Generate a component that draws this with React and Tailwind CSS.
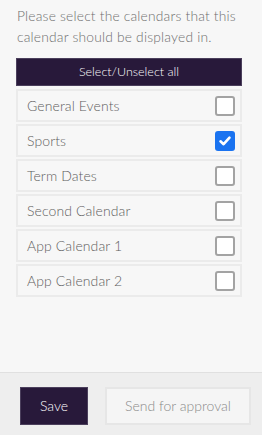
import React, { useState } from 'react'

const calendars = [
  { name: 'General Events', checked: false },
  { name: 'Sports', checked: true },
  { name: 'Term Dates', checked: false },
  { name: 'Second Calendar', checked: false },
  { name: 'App Calendar 1', checked: false },
  { name: 'App Calendar 2', checked: false },
]

function Box({ checked }) {
  if (checked) {
    return (
      <span className="w-[20px] h-[20px] rounded-[3px] bg-[#1a73f0] flex items-center justify-center shrink-0">
        <svg width="14" height="14" viewBox="0 0 14 14" fill="none">
          <path d="M2.5 7.3 L5.6 10.2 L11.5 3.6" stroke="white" strokeWidth="2.6" strokeLinecap="round" strokeLinejoin="round" />
        </svg>
      </span>
    )
  }
  return <span className="w-[20px] h-[20px] rounded-[3px] border-2 border-[#a3a3a3] bg-white shrink-0"></span>
}

export default function App() {
  const [items, setItems] = useState(calendars)

  const toggle = i => setItems(items.map((c, j) => (j === i ? { ...c, checked: !c.checked } : c)))

  return (
    <div className="w-[262px] h-[435px] bg-[#f7f7f7] flex flex-col font-light font-['Lato','Liberation_Sans',sans-serif]">
      <div className="flex-1 px-[16px] pt-[5px]">
        {/* Intro */}
        <p className="text-[13.8px] leading-[21px] text-[#6e6e6e] pl-[1px] tracking-[0.2px]">
          Please select the calendars that this calendar should be displayed in.
        </p>

        {/* Select all */}
        <button className="mt-[11px] w-[226px] h-[28px] bg-[#28193a] border border-[#4b3f5c] text-white text-[12.5px] flex items-center justify-center">
          Select/Unselect all
        </button>

        {/* List */}
        <div className="mt-[3px] flex flex-col gap-[2px] w-[226px]">
          {items.map((c, i) => (
            <div
              key={c.name}
              onClick={() => toggle(i)}
              className="h-[33px] border-2 border-[#ebebeb] bg-[#f7f7f7] flex items-center justify-between pl-[9px] pr-[5px]"
            >
              <span className="text-[14px] text-[#5e5e5e] tracking-[0.1px]">{c.name}</span>
              <Box checked={c.checked} />
            </div>
          ))}
        </div>
      </div>

      {/* Footer */}
      <div className="h-[63px] border-t border-[#e0e0e0] bg-[#eeeeee] flex items-center gap-[17px] pl-[20px] pt-[3px]">
        <button className="w-[68px] h-[38px] bg-[#28193a] border border-[#4b3f5c] text-white text-[14px]">
          Save
        </button>
        <button className="w-[146px] h-[38px] bg-[#f5f5f5] border-2 border-[#e6e6e6] text-[#8a8a8a] text-[14px]">
          Send for approval
        </button>
      </div>
    </div>
  )
}
